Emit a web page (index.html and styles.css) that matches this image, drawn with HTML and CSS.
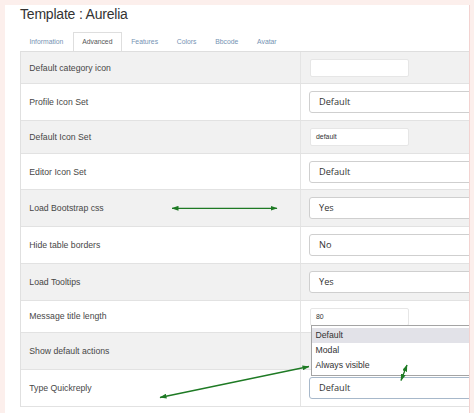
FILE: index.html
```html
<!DOCTYPE html>
<html>
<head>
<meta charset="utf-8">
<link rel="stylesheet" href="styles.css">
</head>
<body>
<div class="page">
  <h1 class="title">Template : Aurelia</h1>
  <ul class="tabs">
    <li class="tab">Information</li>
    <li class="tab active">Advanced</li>
    <li class="tab">Features</li>
    <li class="tab">Colors</li>
    <li class="tab">Bbcode</li>
    <li class="tab">Avatar</li>
  </ul>
  <div class="table">
    <div class="row alt"><div class="label">Default category icon</div><div class="field"><div class="input"></div></div></div>
    <div class="row"><div class="label">Profile Icon Set</div><div class="field"><div class="select">Default</div></div></div>
    <div class="row alt"><div class="label">Default Icon Set</div><div class="field"><div class="input">default</div></div></div>
    <div class="row"><div class="label">Editor Icon Set</div><div class="field"><div class="select">Default</div></div></div>
    <div class="row alt"><div class="label">Load Bootstrap css</div><div class="field"><div class="select">Yes</div></div></div>
    <div class="row"><div class="label">Hide table borders</div><div class="field"><div class="select">No</div></div></div>
    <div class="row alt"><div class="label">Load Tooltips</div><div class="field"><div class="select">Yes</div></div></div>
    <div class="row"><div class="label">Message title length</div><div class="field"><div class="input">80</div></div></div>
    <div class="row alt"><div class="label">Show default actions</div><div class="field"><div class="select covered">Default</div></div></div>
    <div class="row"><div class="label">Type Quickreply</div><div class="field"><div class="select focus">Default
      <ul class="dropdown">
        <li class="opt hl">Default</li>
        <li class="opt">Modal</li>
        <li class="opt">Always visible</li>
      </ul></div></div></div>
  </div>
</div>
<svg class="arrows" width="474" height="413" viewBox="0 0 474 413">
  <defs>
    <marker id="ah" markerUnits="userSpaceOnUse" markerWidth="7" markerHeight="5" refX="6.5" refY="2.5" orient="auto-start-reverse">
      <path d="M0,0 L7,2.5 L0,5 z" fill="#1e7a24"/>
    </marker>
  </defs>
  <line x1="172" y1="208.3" x2="277" y2="208.3" stroke="#1e7a24" stroke-width="1.3" marker-start="url(#ah)" marker-end="url(#ah)"/>
  <line x1="160" y1="397.5" x2="309" y2="366.5" stroke="#1e7a24" stroke-width="1.3" marker-start="url(#ah)" marker-end="url(#ah)"/>
  <line x1="401" y1="380.5" x2="407" y2="365" stroke="#1e7a24" stroke-width="1.3" marker-start="url(#ah)" marker-end="url(#ah)"/>
</svg>
</body>
</html>
```
FILE: styles.css
```css
html, body {
  margin: 0;
  padding: 0;
}
body {
  width: 474px;
  height: 413px;
  overflow: hidden;
  position: relative;
  background: #fcefec;
  font-family: "Liberation Sans", Arial, sans-serif;
  color: #333;
}
.page {
  margin: 5px 4px 0 5px;
  height: 408px;
  background: #fff;
  padding-left: 15px;
  overflow: hidden;
  box-sizing: border-box;
  border-right: 1px solid #f3d2d0;
}
.title {
  margin: 0;
  padding-top: 1px;
  font-size: 14px;
  line-height: 17px;
  font-weight: normal;
  letter-spacing: -0.2px;
  color: #333;
}
.tabs {
  display: flex;
  list-style: none;
  margin: 8.7px 0 0;
  padding: 0;
}
.tab {
  height: 18px;
  line-height: 18px;
  padding: 0 8.4px;
  border: 1px solid transparent;
  border-bottom: 0;
  font-size: 6.8px;
  color: #7593b3;
}
.tab.active {
  border-color: #dedede;
  color: #555;
  background: #fff;
}
.table {
  width: 470px;
  border-top: 1px solid #dedede;
  border-left: 1px solid #e0e0e0;
}
.row {
  display: grid;
  grid-template-columns: 280px 1fr;
  border-bottom: 1px solid #e2e2e2;
  background: #fff;
}
.row.alt {
  background: #f1f1f1;
}
.label {
  display: flex;
  align-items: center;
  padding: 0 8.3px;
  border-right: 1px solid #e4e4e4;
  font-size: 8.7px;
  color: #474747;
}
.field {
  padding: 7px 0 6.7px 8px;
}
.input {
  width: 99px;
  height: 18px;
  box-sizing: border-box;
  margin-left: 1px;
  border: 1px solid #e6e6e6;
  border-radius: 2px;
  background: #fff;
  font-size: 6.9px;
  line-height: 16px;
  padding-left: 5px;
  color: #333;
}
.select {
  position: relative;
  width: 220px;
  height: 22px;
  box-sizing: border-box;
  border: 1px solid #cfcfcf;
  border-radius: 3px;
  background: #fff;
  font-family: "Open Sans", "Liberation Sans", sans-serif;
  font-size: 9.2px;
  line-height: 20px;
  padding-left: 9px;
  color: #333;
}
.select.covered {
  visibility: hidden;
}
.select.focus {
  border-color: #a7b8ca;
}
.dropdown {
  visibility: visible;
  position: absolute;
  left: 0.5px;
  bottom: calc(100% + 1.5px);
  width: 220px;
  margin: 0;
  padding: 2px 0;
  list-style: none;
  background: #fff;
  border: 1px solid #a4a4a4;
  font-family: "Liberation Sans", Arial, sans-serif;
  font-size: 8.7px;
  line-height: 15px;
  color: #333;
}
.opt {
  padding-left: 4px;
  height: 15px;
}
.opt.hl {
  background: #e2e2e8;
}
.arrows {
  position: absolute;
  left: 0;
  top: 0;
  pointer-events: none;
}
```
